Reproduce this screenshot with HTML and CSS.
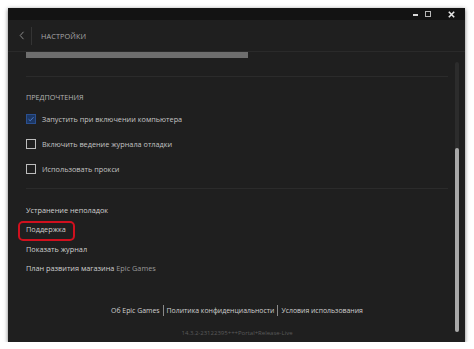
FILE: index.html
```html
<!DOCTYPE html>
<html lang="ru">
<head>
<meta charset="utf-8">
<link rel="stylesheet" href="styles.css">
</head>
<body>
<div class="window">
  <div class="titlebar">
    <span class="ctl ctl-min"></span>
    <span class="ctl ctl-max"></span>
    <svg class="ctl-close" width="7" height="7" viewBox="0 0 7 7"><path d="M0.8 0.8L6.2 6.2M6.2 0.8L0.8 6.2" stroke="#e6e6e6" stroke-width="1.6"/></svg>
  </div>
  <div class="header">
    <svg class="back" width="6" height="9" viewBox="0 0 6 9"><path d="M4.5 0.8L1.2 4.5L4.5 8.2" fill="none" stroke="#8a8a8a" stroke-width="1"/></svg>
    <span class="divider"></span>
    <span class="title">НАСТРОЙКИ</span>
  </div>
  <div class="content">
    <div class="main">
      <div class="progress"></div>
      <div class="rule rule-first"></div>
      <div class="section-title">ПРЕДПОЧТЕНИЯ</div>
      <div class="row"><span class="box box-on"><svg width="8" height="8" viewBox="0 0 8 8"><path d="M1.5 4.2L3.2 5.8L6.5 2.2" fill="none" stroke="#4d78c4" stroke-width="1"/></svg></span><span>Запустить при включении компьютера</span></div>
      <div class="row"><span class="box"></span><span>Включить ведение журнала отладки</span></div>
      <div class="row"><span class="box"></span><span>Использовать прокси</span></div>
      <div class="rule rule-second"></div>
      <div class="links">
        <div class="link">Устранение неполадок</div>
        <div class="link link-marked">Поддержка</div>
        <div class="link">Показать журнал</div>
        <div class="link">План развития магазина <span class="dim">Epic Games</span></div>
      </div>
      <div class="footer">
        <div class="footer-links"><span>Об Epic Games</span><span class="sep"></span><span>Политика конфиденциальности</span><span class="sep"></span><span>Условия использования</span></div>
        <div class="version">14.3.2-23122395+++Portal+Release-Live</div>
      </div>
    </div>
    <div class="scrollbar"><div class="thumb"></div></div>
  </div>
</div>
</body>
</html>
```
FILE: styles.css
```css
* { box-sizing: border-box; }
html, body { margin: 0; padding: 0; background: #ffffff; }
body {
  padding: 8px 0 0 8px;
  font-family: "Open Sans", "Noto Sans", sans-serif;
  color: #c8c8c8;
}
.window {
  width: 457px;
  height: 334px;
  background: #1f1f1f;
  display: flex;
  flex-direction: column;
  box-shadow: 0 1px 4px rgba(0,0,0,0.55);
}
.titlebar {
  height: 12px;
  background: #131313;
  display: flex;
  align-items: center;
  justify-content: flex-end;
  padding-right: 10px;
  gap: 7px;
}
.ctl { display: block; }
.ctl-min { width: 5px; height: 2px; background: #d8d8d8; margin-top: 2px; }
.ctl-max { width: 6px; height: 6px; border: 1px solid #b8b8b8; margin-right: 10px; }
.ctl-close { display: block; }
.header {
  height: 32px;
  display: flex;
  align-items: center;
  border-bottom: 1px solid #2a2a2a;
  padding-left: 11px;
}
.back { display: block; }
.divider { width: 1px; height: 18px; background: #343434; margin-left: 6px; margin-right: 9px; }
.title { font-size: 7.3px; color: #a8a8a8; letter-spacing: 0.1px; }
.content { flex: 1; display: flex; position: relative; }
.main { flex: 1; padding: 0 17px 0 18px; display: flex; flex-direction: column; }
.progress { width: 222px; height: 6px; background: #6e6e6e; }
.rule { height: 1px; background: #2b2b2b; }
.rule-first { margin-top: 18px; }
.section-title { margin-top: 14px; height: 12px; line-height: 12px; font-size: 7.2px; color: #b4b4b4; }
.row {
  height: 25px;
  display: flex;
  align-items: center;
  gap: 6px;
  font-size: 7.3px;
  font-weight: 500;
  color: #c4c4c4;
}
.section-title + .row { margin-top: 3px; }
.box {
  width: 10px; height: 10px;
  border: 1.5px solid #bdbdbd;
  display: flex; align-items: center; justify-content: center;
}
.box-on { background: #1c3763; border-color: #2a4f8f; }
.box svg { display: block; }
.rule-second { margin-top: 7px; }
.links { margin-top: 12px; display: flex; flex-direction: column; }
.link { height: 19.3px; line-height: 19.3px; font-size: 7.3px; font-weight: 500; color: #cfcfcf; }
.link-marked { position: relative; align-self: flex-start; }
.link-marked::after {
  content: "";
  position: absolute;
  left: -8px; right: -9px; top: 1px; bottom: -1px;
  border: 2px solid #d0101e;
  border-radius: 5px;
}
.dim { color: #9a9a9a; }
.footer { margin-top: auto; padding-bottom: 5px; display: flex; flex-direction: column; align-items: center; }
.footer-links { display: flex; align-items: center; gap: 3px; font-size: 6.9px; font-weight: 500; color: #cfcfcf; height: 14px; }
.sep { width: 1px; height: 11px; background: #8a8a8a; }
.version { margin-top: 12px; font-size: 6px; color: #5a5a5a; height: 8px; line-height: 8px; }
.scrollbar {
  position: absolute;
  right: 6px;
  top: 10px;
  bottom: 10px;
  width: 4px;
  background: #2c2c2c;
  border-radius: 2px;
  display: flex;
  flex-direction: column;
  justify-content: flex-end;
}
.thumb { height: 184px; background: #a9a9a9; border-radius: 2px; }
```
